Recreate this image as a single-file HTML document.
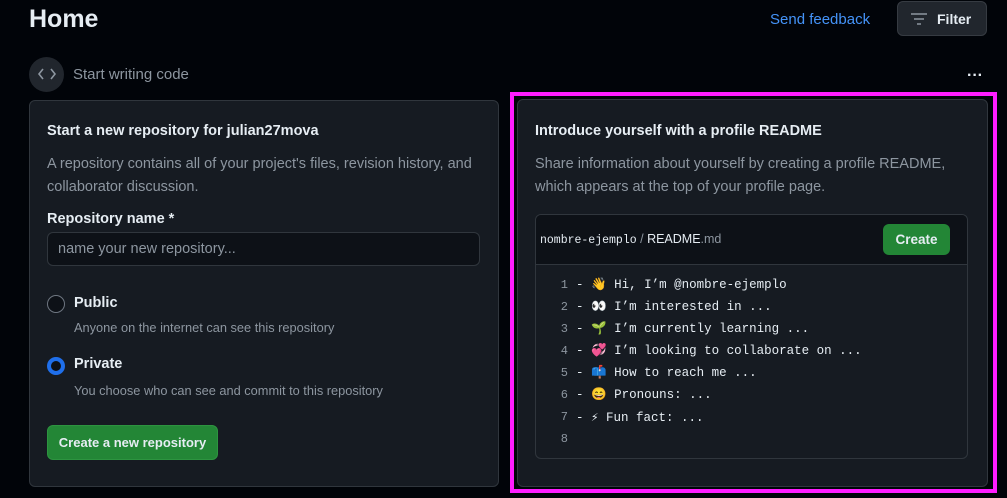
<!DOCTYPE html>
<html><head><meta charset="utf-8"><style>
*{box-sizing:border-box;margin:0;padding:0}
body{width:1007px;height:498px;background:#010409;font-family:"Liberation Sans",sans-serif;color:#e6edf3;position:relative;overflow:hidden}
.a{position:absolute}
.card{background:#161b22;border:1px solid #30363d;border-radius:6px}
.mono{font-family:"Liberation Mono","DejaVu Sans Mono",monospace}
.muted{color:#8d96a0}
.ln{position:absolute;left:22px;width:10px;text-align:right;color:#8d96a0;font-size:12px}
.lt{position:absolute;left:40px;font-size:12.5px;color:#e6edf3;white-space:pre}
</style></head><body>
<div class="a" style="left:29px;top:5px;font-size:25px;font-weight:600">Home</div>
<div class="a" style="left:770px;top:11px;font-size:15px;color:#4493f8">Send feedback</div>
<div class="a" style="left:897px;top:1px;width:90px;height:35px;background:#21262d;border:1px solid #363b42;border-radius:6px"></div>
<svg class="a" style="left:910px;top:12px" width="18" height="14"><path d="M1 2h16M4 7h10M7 12h4" stroke="#8d96a0" stroke-width="1.6"/></svg>
<div class="a" style="left:937px;top:11px;font-size:14px;font-weight:700">Filter</div>
<div class="a" style="left:29px;top:57px;width:35px;height:35px;border-radius:50%;background:#21262d"></div>
<svg class="a" style="left:37px;top:66px" width="20" height="16"><path d="M6 3L2 8l4 5M14 3l4 5-4 5" stroke="#8d96a0" stroke-width="1.6" fill="none"/></svg>
<div class="a muted" style="left:73px;top:66px;font-size:15px">Start writing code</div>
<div class="a" style="left:967px;top:67px;font-size:16px;letter-spacing:0px;font-weight:700">···</div>

<div class="a card" style="left:29px;top:100px;width:470px;height:387px"></div>
<div class="a" style="left:47px;top:123px;font-size:14.5px;font-weight:700">Start a new repository for julian27mova</div>
<div class="a muted" style="left:47px;top:153px;font-size:14.5px;line-height:23px;width:430px">A repository contains all of your project's files, revision history, and collaborator discussion.</div>
<div class="a" style="left:47px;top:211px;font-size:14.5px;font-weight:700">Repository name *</div>
<div class="a" style="left:47px;top:232px;width:433px;height:34px;background:#0d1117;border:1px solid #30363d;border-radius:6px;padding:8px 10px;font-size:14.5px;color:#8d96a0">name your new repository...</div>
<div class="a" style="left:47px;top:295px;width:18px;height:18px;border-radius:50%;border:1px solid #6e7681;background:#0d1117"></div>
<div class="a" style="left:74px;top:295px;font-size:14.5px;font-weight:700">Public</div>
<div class="a muted" style="left:74px;top:320px;font-size:12.8px">Anyone on the internet can see this repository</div>
<div class="a" style="left:47px;top:357px;width:18px;height:18px;border-radius:50%;border:4px solid #1f6feb;background:#0d1117"></div>
<div class="a" style="left:74px;top:356px;font-size:14.5px;font-weight:700">Private</div>
<div class="a muted" style="left:74px;top:383px;font-size:12.8px">You choose who can see and commit to this repository</div>
<div class="a" style="left:47px;top:425px;width:171px;height:35px;background:#238636;border:1px solid #2d9440;border-radius:6px;font-size:13px;font-weight:700;text-align:center;line-height:33px">Create a new repository</div>

<div class="a" style="left:510px;top:92px;width:487px;height:401px;border:4px solid #ff1dff"></div>
<div class="a card" style="left:517px;top:99px;width:471px;height:388px"></div>
<div class="a" style="left:535px;top:123px;font-size:14.5px;font-weight:700">Introduce yourself with a profile README</div>
<div class="a muted" style="left:535px;top:153px;font-size:14.5px;line-height:23px;width:432px">Share information about yourself by creating a profile README, which appears at the top of your profile page.</div>
<div class="a" style="left:535px;top:214px;width:433px;height:245px;border:1px solid #30363d;border-radius:6px;overflow:hidden">
 <div style="height:50px;background:#0d1117;border-bottom:1px solid #30363d;position:relative">
  <div class="a" style="left:4px;top:17px;font-size:12.5px"><span class="mono" style="font-size:11.5px">nombre-ejemplo</span> <span class="muted">/</span> README<span class="muted">.md</span></div>
  <div class="a" style="left:347px;top:9px;width:67px;height:31px;background:#238636;border-radius:6px;font-size:13.5px;font-weight:700;text-align:center;line-height:31px">Create</div>
 </div>
 <div style="position:relative" class="mono">
  <div class="ln" style="top:13px">1</div><div class="lt" style="top:12px">- 👋 Hi, I’m @nombre-ejemplo</div>
  <div class="ln" style="top:35px">2</div><div class="lt" style="top:34px">- 👀 I’m interested in ...</div>
  <div class="ln" style="top:57px">3</div><div class="lt" style="top:56px">- 🌱 I’m currently learning ...</div>
  <div class="ln" style="top:79px">4</div><div class="lt" style="top:78px">- 💞️ I’m looking to collaborate on ...</div>
  <div class="ln" style="top:101px">5</div><div class="lt" style="top:100px">- 📫 How to reach me ...</div>
  <div class="ln" style="top:123px">6</div><div class="lt" style="top:122px">- 😄 Pronouns: ...</div>
  <div class="ln" style="top:145px">7</div><div class="lt" style="top:144px">- ⚡ Fun fact: ...</div>
  <div class="ln" style="top:167px">8</div>
 </div>
</div>
</body></html>
